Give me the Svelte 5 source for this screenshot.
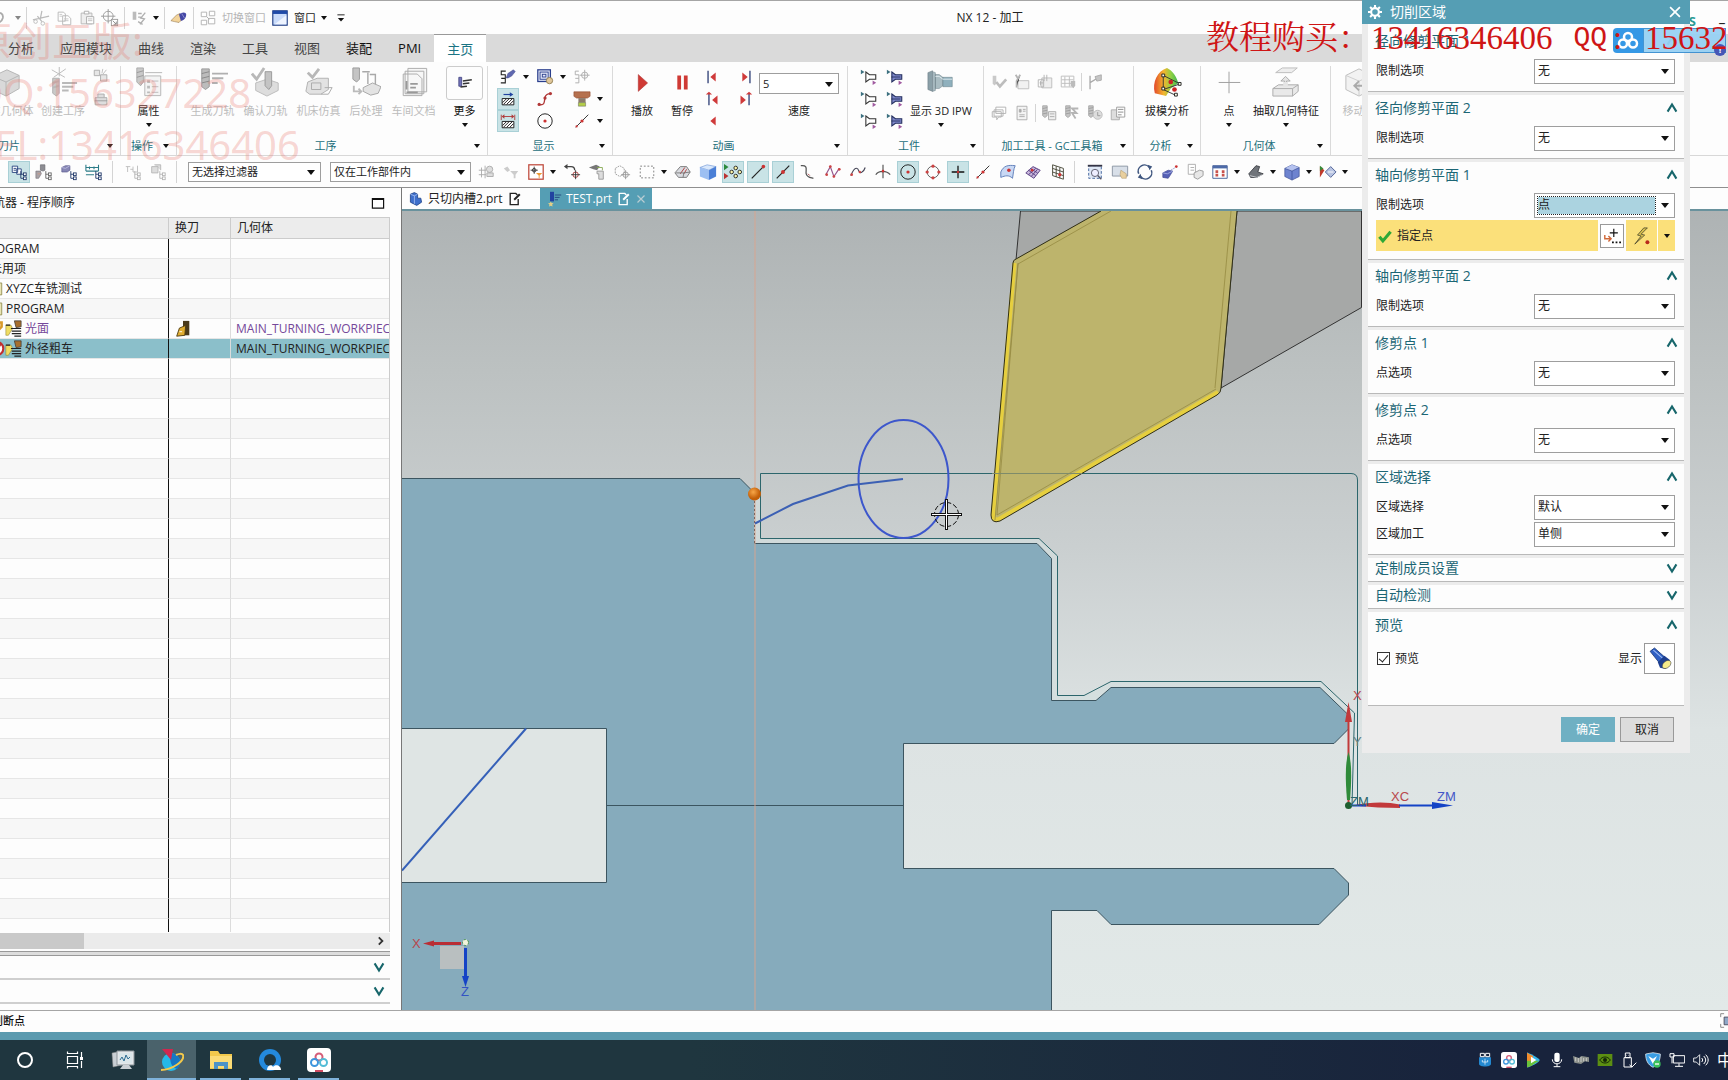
<script>
  const tree = '<path d="M12 9v8h3M12 12.500h3" fill="none" stroke="#223a6a"/><rect x="15" y="11" width="3" height="3" fill="#fff" stroke="#223a6a"/><rect x="15" y="15.500" width="3" height="3" fill="#fff" stroke="#223a6a"/>';
  const greyTool = '<path d="M3 2h5v11l-2.500 2L3 13z" fill="#c4c4c4" stroke="#a9a9a9"/><path d="M3 5l5-1M3 8l5-1M3 11l5-1" stroke="#9c9c9c"/>';
  const small = {
    undo: '<path d="M3 6c5-4 10-1 9 4-.5 2-2 4-4 5" fill="none" stroke="#aaa" stroke-width="2"/>',
    cut: '<path d="M1 12L19 8M6 8l5 6M11 2L9 12" stroke="#bbb" stroke-width="1.400" fill="none"/><circle cx="4" cy="14" r="2" fill="none" stroke="#bbb"/><circle cx="12" cy="16" r="2" fill="none" stroke="#bbb"/>',
    copy: '<path d="M3.500 3.500h6l2 2v8h-8zM8.500 7.500h6l3 3v7h-9z" fill="#fff" stroke="#b5b5b5"/><path d="M10 11h5M10 13h5M5 6h3M5 8h3" stroke="#c5c5c5"/>',
    paste: '<path d="M3.500 4.500h12v12h-12z" fill="#eee" stroke="#b5b5b5"/><path d="M7 2.500h5v3H7zM9.500 8.500h8v8h-8z" fill="#fff" stroke="#aaa"/><path d="M11 11h5M11 13h5" stroke="#bbb"/>',
    target: '<circle cx="8" cy="8" r="5.500" fill="none" stroke="#999"/><path d="M8 0v16M0 8h16" stroke="#999"/><rect x="11.500" y="11.500" width="7" height="7" fill="#fff" stroke="#999"/><path d="M13 13l4 4M17 14v3h-3" stroke="#888" fill="none"/>',
    tool: '<path d="M3 3h4v9H3z" fill="#bbb"/><path d="M9 5h4M9 9h3M9 14l5 3M17 4l-5 6 4 1-5 6" stroke="#b0b0b0" fill="none" stroke-width="1.500"/>',
    hand: '<path d="M1 13l6-6 4-2 3 6-4 4-5-1z" fill="#f3d49b" stroke="#8d6d40" stroke-width=".6"/><path d="M10 6c3-3 8-3 8 0 0 4-3 7-6 7z" fill="#4548a5"/><path d="M13 5l3 5" stroke="#8f92d2"/>',
    switchw: '<path d="M2.500 3.500h6v5h-6zM11.500 2.500h6v5h-6zM2.500 12.500h6v5h-6zM10.500 10.500h7v6h-7z" fill="#fff" stroke="#b0b0b0"/><path d="M8.500 8.500l3 3" stroke="#aaa"/>',
    window: '<rect x="2" y="2" width="16" height="16" fill="#c9dbfa" stroke="#17357e" stroke-width="1.200"/><path d="M2 2h16v3.500H2z" fill="#1f4aa8"/><path d="M4 17L17 7v10z" fill="#eef4ff"/>',
    custom: '<path d="M6 6.500h8" stroke="#111"/><path d="M6.500 10h7L10 14z" fill="#111"/>',
    geo: '<path d="M2.500 2.500h6v6h-6zM9.500 7.500h7v7h-7z" fill="#e6e6e6" stroke="#aaa"/><path d="M12 1l-1 5M16 2l-4 5" stroke="#bbb"/>',
    box: '<path d="M3.500 8.500h13v8h-13zM6.500 8V4.500h7V8" fill="#ddd" stroke="#aaa"/><path d="M3 12h14" stroke="#999"/>',
    path1: '<path d="M7.500 3.500h-5v4h4.500v4H2.500M7 11.500v5H2" fill="none" stroke="#222" stroke-width="1.200"/><path d="M8 11l2-5 6-4 2 2-4 5-4 2z" fill="#5f68b0" stroke="#3f4488" stroke-width=".6"/>',
    path2: '<rect x="2" y="2" width="14" height="13" fill="#e4e8f8" stroke="#2a3f8c" stroke-width="1.400"/><rect x="4.500" y="4.500" width="9" height="8" fill="none" stroke="#2a3f8c"/><rect x="7" y="7" width="4" height="3" fill="none" stroke="#2a3f8c"/><circle cx="15" cy="14" r="3.500" fill="#e0c79b" stroke="#8f7a4c"/>',
    path3: '<path d="M6.500 3.500h-4v4h4v4h-4M6.500 11.500v5h-4" fill="none" stroke="#aaa"/><circle cx="13" cy="8" r="3.500" fill="none" stroke="#aaa"/><path d="M13 2v12M7.500 8h11" stroke="#aaa"/>',
    hatch1: '<path d="M3.500 9.500h13v7h-13z" fill="#fff" stroke="#111"/><path d="M4 14l4-4M5 16l6-6M8.500 16l6-6M12 16l4-4" stroke="#111"/><path d="M5 5h8" stroke="#2143a0" stroke-width="1.300"/><path d="M12 2.500l4 2.500-4 2.500z" fill="#2143a0"/>',
    hatch2: '<path d="M3.500 10.500h13v7h-13z" fill="#fff" stroke="#111"/><path d="M4 15l4-4M5 17l6-6M8.500 17l6-6M12 17l4-4" stroke="#111"/><path d="M2.500 3v6M17.500 3v6M5 5h10" stroke="#b03a3a" fill="none"/><path d="M6 2.500L3 5l3 2.500zM14 2.500l3 2.500-3 2.500z" fill="#b03a3a"/>',
    curve: '<path d="M3 16c8 2 6-5 7-8s3-4 6-4" fill="none" stroke="#b03a3a" stroke-width="1.500"/><circle cx="3.500" cy="16" r="1.800" fill="#b23838"/><circle cx="10" cy="9" r="1.800" fill="#b23838"/><circle cx="16" cy="4" r="1.800" fill="#b23838"/>',
    circ: '<circle cx="10" cy="10" r="8" fill="none" stroke="#111"/><circle cx="10" cy="10" r="1.800" fill="#c33"/>',
    holder: '<path d="M1 2h18v5l-3 2H4L1 7z" fill="#b5714f" stroke="#8a4327" stroke-width=".6"/><path d="M6 9h8v5H6z" fill="#8b7b6c"/><path d="M6 14h8v4H6z" fill="#b5cf49" stroke="#555" stroke-width=".5"/>',
    line: '<path d="M3 17L17 3" stroke="#222"/><circle cx="10" cy="10" r="1.800" fill="#c33"/><circle cx="4" cy="16" r="1.200" fill="#c33"/>',
    toStart: '<path d="M4.500 3v14" stroke="#24356f" stroke-width="1.400"/><path d="M13 5v10l-6-5z" fill="#cf3a3a"/>',
    toEnd: '<path d="M15.500 3v14" stroke="#24356f" stroke-width="1.400"/><path d="M7 5v10l6-5z" fill="#cf3a3a"/>',
    prev: '<path d="M5.500 4v13" stroke="#24356f" stroke-width="1.400"/><path d="M2 5l3.500-3L9 5z" fill="#cf3a3a"/><path d="M15 6v10l-6-5z" fill="#cf3a3a"/>',
    next: '<path d="M14.500 4v13" stroke="#24356f" stroke-width="1.400"/><path d="M11 5l3.500-3L18 5z" fill="#cf3a3a"/><path d="M5 6v10l6-5z" fill="#cf3a3a"/>',
    back: '<path d="M13 5v10l-6-5z" fill="#cf3a3a"/>',
    ipwA: '<path d="M6.500 4.500l4 3h7v5h-7l-4 3z" fill="#fff" stroke="#333" stroke-width="1.200"/><path d="M1 2l4 2.500L1 7z" fill="#3d7180"/><path d="M14 14l4 2.500-4 2.500z" fill="#a05aa0"/>',
    ipwB: '<path d="M6.500 4.500l4 3h7v5h-7l-4 3z" fill="#7d86c9" stroke="#25305f" stroke-width="1.200"/><path d="M6 10h10" stroke="#25305f"/><path d="M1 2l4 2.500L1 7z" fill="#3d7180"/><path d="M14 14l4 2.500-4 2.500z" fill="#a05aa0"/>',
    g1: '<path d="M3 3h4v9l-2 2-2-2z" fill="#c9c9c9"/><path d="M7 10l4 5 7-8" fill="none" stroke="#bdbdbd" stroke-width="3"/>',
    g2: '<path d="M5.500 8.500h12v9h-12z" fill="#f1f1f1" stroke="#bbb"/><path d="M3 2l3 5M8 2L4 9v7" stroke="#b5b5b5" stroke-width="2"/>',
    g3: '<path d="M6.500 5.500h11v11h-11z" fill="#eee" stroke="#bbb"/><path d="M2.500 7.500h6v8h-6zM9 2v7M12 2v7M5 9v5M4 11h4" fill="none" stroke="#b0b0b0"/>',
    g4: '<path d="M2.500 3.500h14v12h-14zM3 7.500h13M3 11.500h13M6.500 4v11M11.500 4v11" fill="none" stroke="#bbb"/><path d="M13 9h5v5l-2 3-3-3z" fill="#bbb"/>',
    g5: '<path d="M4.500 3v15M4 11l10-6" stroke="#aaa" stroke-width="1.500"/><path d="M10 4l7-2v6l-5 1z" fill="#c6c6c6" stroke="#aaa"/>',
    g6: '<path d="M6.500 3.500h11v7h-11zM4.500 6.500h10v7h-10zM2.500 8.500h10v6h-3l-2 3v-3h-5z" fill="#fff" stroke="#b0b0b0"/>',
    g7: '<path d="M4.500 2.500h11v15h-11z" fill="#f4f4f4" stroke="#aaa"/><path d="M7 6h2v3H7zM11 6h3M11 8h3M7 12h6M7 14h6" fill="#aaa" stroke="#aaa"/>',
    g8: greyTool + '<path d="M9.500 8.500h8v9h-8z" fill="#eee" stroke="#aaa"/><path d="M11 11h5M11 14h5" stroke="#aaa"/>',
    g9: greyTool + '<path d="M17 5h-7l5 5h-5l4 6" fill="none" stroke="#b5b5b5" stroke-width="2"/>',
    g10: greyTool + '<circle cx="13" cy="12" r="5" fill="#ddd" stroke="#bbb"/><path d="M13 9v4h3" stroke="#999" fill="none"/>',
    g11: '<path d="M2.500 6.500h9v11h-9z" fill="#ddd" stroke="#aaa"/><path d="M8.500 3.500h9v11h-9z" fill="#fff" stroke="#999"/><path d="M10 6h6M10 9h6M10 12h4" stroke="#888"/>',
    v1: '<path d="M2.500 3.500h6v7h-6zM7.500 6.500h5v6h-5z" fill="#fff" stroke="#27427e"/><path d="M4 6h3M4 8h3" stroke="#27427e"/>' + tree,
    v2: '<path d="M6 2h5v6L9 9 6 8z" fill="#8d8d93" stroke="#66666d" stroke-width=".7"/><path d="M1 9h5l1 3-3 5H1z" fill="#a9a3a6" stroke="#77727a" stroke-width=".7"/><path d="M3 12h3" stroke="#c98"/>' + tree.replaceAll('#223a6a', '#666'),
    v3: '<path d="M2 5l4-2h5v5l-3 2H2z" fill="#8787b5" stroke="#57578a" stroke-width=".7"/><path d="M2 5l4 1 5-3" stroke="#b9b9dc" fill="none"/>' + tree,
    v4: '<path d="M1 5h14M1 9h14M1 2v7M5 4v3M10 4v3M15 2v7M1 13h9" stroke="#2c7c88" fill="none" stroke-width="1.200"/>' + tree,
    v5: '<path d="M2 4h5M4 4v6M10 4v6h5V3M7 7h3" stroke="#bbb" fill="none"/>' + tree.replaceAll('#223a6a', '#b5b5b5'),
    v6: '<path d="M3 4h7v7H3zM6 2h7v6" fill="#ddd" stroke="#b5b5b5"/>' + tree.replaceAll('#223a6a', '#b5b5b5'),
    s1: '<path d="M5 5v11M2 8h8M2 13h8M9 3v14" stroke="#aaa" fill="none"/><circle cx="14" cy="7" r="3.500" fill="#ddd" stroke="#aaa"/><path d="M11 11h7v4h-7z" fill="#ddd" stroke="#aaa"/>',
    s2: '<path d="M2 6l4-2 3 4-3 2z" fill="#ccc"/><path d="M9 9h9l-3 4v4h-2v-4z" fill="#ccc"/>',
    s3: '<rect x="2" y="2" width="16" height="16" fill="#fff" stroke="#bf4a3c" stroke-width="1.400"/><circle cx="8" cy="8" r="2" fill="none" stroke="#333"/><path d="M8 4v8M4 8h8" stroke="#333"/><path d="M10 11h7l-3 3v3h-1v-3z" fill="#ee9a35"/>',
    s4: '<path d="M3 4h6c3 0 4 2 4 4" fill="none" stroke="#444" stroke-width="1.500"/><path d="M1 4l4-3v6z" fill="#444"/><circle cx="14" cy="13" r="3" fill="none" stroke="#a33"/><path d="M14 8v10M9 13h10" stroke="#333"/>',
    s5: '<path d="M1 5l8-3 4 2-3 4-4-1z" fill="#777"/><path d="M10 9h7v9h-5v-6h-2z" fill="#ddd" stroke="#999"/><path d="M10 5h6v3" stroke="#8a5" fill="none"/>',
    s6: '<path d="M2.500 6l5-3 5 3v6l-5 3-5-3z" fill="none" stroke="#999" stroke-dasharray="2 1"/><circle cx="14" cy="13" r="3" fill="none" stroke="#999"/><path d="M14 8v10M9 13h10" stroke="#999"/>',
    s7: '<rect x="2.500" y="3.500" width="15" height="13" fill="none" stroke="#777" stroke-dasharray="2 2"/>',
    s8: '<path d="M1 11l6-7h7l4 6-4 6H5z" fill="#d9dbe0" stroke="#777"/><path d="M7 12l5-7M11 12l3-5" stroke="#a33"/><path d="M2 11h9l7-1M11 11l-1 5" stroke="#777" fill="none"/>',
    s9: '<path d="M1 5l8-3 10 2-8 4z" fill="#d9e8fc" stroke="#5b86cf" stroke-width=".6"/><path d="M1 5l10 3v11l-10-4z" fill="#9cbff2"/><path d="M11 8l8-4v11l-8 4z" fill="#4b7fd6"/>',
    snap: '<path d="M0 1l5 3.500L0 8z" fill="#2a8a3c"/><path d="M0 11l5 3.500L0 18z" fill="#b33"/><g fill="#fff7a8" stroke="#222"><circle cx="13" cy="5.500" r="2"/><circle cx="8.500" cy="10" r="2"/><circle cx="17.500" cy="10" r="2"/><circle cx="13" cy="14.500" r="2"/></g>',
    end: '<path d="M3 17L16 4" stroke="#222" stroke-width="1.300"/><circle cx="16" cy="4" r="2" fill="#c33"/>',
    mid: '<path d="M3 17L17 3" stroke="#222" stroke-width="1.300"/><circle cx="10" cy="10" r="2.200" fill="#c33"/>',
    tan: '<path d="M2 3c9-1 5 5 6 9s4 4 8 5" fill="none" stroke="#555" stroke-width="1.400"/><path d="M10 12l2 2" stroke="#a33"/>',
    poly: '<path d="M2 13l5-9 4 11 6-9" fill="none" stroke="#93568d" stroke-width="1.300"/><g fill="#c44"><circle cx="3" cy="13" r="1.500"/><circle cx="7" cy="4" r="1.500"/><circle cx="11" cy="15" r="1.500"/><circle cx="17" cy="7" r="1.500"/></g>',
    spl: '<path d="M2 14c5-12 8-8 9-5s5 2 7-4" fill="none" stroke="#445" stroke-width="1.300"/><circle cx="3" cy="13" r="1.500" fill="#c44"/><circle cx="12" cy="10" r="1.300" fill="#c44"/>',
    inter: '<path d="M10 2v15M2 13c3-5 12-5 16 0" fill="none" stroke="#555" stroke-width="1.300"/><circle cx="10" cy="9" r="1.500" fill="#c33"/>',
    quad: '<circle cx="10" cy="10" r="6.500" fill="none" stroke="#555"/><g fill="#c44"><circle cx="10" cy="3.500" r="1.800"/><circle cx="10" cy="16.500" r="1.800"/><circle cx="3.500" cy="10" r="1.800"/><circle cx="16.500" cy="10" r="1.800"/></g>',
    plus: '<path d="M10 3v14M3 10h14" stroke="#111" stroke-width="1.400"/><circle cx="10" cy="10" r="1.300" fill="#c33"/>',
    surf: '<path d="M2 10c3-7 8-8 16-7-2 4-2 9-3 14-4-4-8-3-13-1z" fill="#c8d8f4" stroke="#5878b5"/><circle cx="11" cy="8" r="2" fill="#c33"/>',
    grid: '<path d="M2 11l8-7 8 4-7 9z" fill="#c9b7dd" stroke="#553c7e"/><path d="M5 8l8 6M7 6l8 5M5 13l8-7M8 15l7-8" stroke="#553c7e"/><circle cx="9" cy="8" r="1.500" fill="#c33"/>',
    grid2: '<path d="M4 2l12 4v12L4 14zM8 3.500v12M12 5v12M4 6l12 4M4 10l12 4" fill="none" stroke="#443"/><circle cx="12" cy="13" r="1.800" fill="#c33"/>',
    fit: '<path d="M3 3h14v14H3z" fill="#dfe8f6" stroke="#3a5d98" stroke-dasharray="3 2"/><path d="M2 3h16" stroke="#334" stroke-width="2"/><circle cx="10" cy="11" r="4" fill="#eef" stroke="#556"/><path d="M13 14l4 4" stroke="#556" stroke-width="1.500"/>',
    zoomw: '<path d="M1.500 3.500h17v11h-17z" fill="#d8dfe8" stroke="#8892a0"/><path d="M11 8l6 4v5h-5l-2-4z" fill="#e8cf9e" stroke="#a58b58" stroke-width=".5"/>',
    rot: '<path d="M3 12A7 7 0 0 1 15 5M17 8A7 7 0 0 1 5 15" fill="none" stroke="#3f567f" stroke-width="1.700"/><path d="M13 2l5 2-3 4zM7 18l-5-2 3-4z" fill="#3f567f"/>',
    pan: '<path d="M2 11l6-3 5 1-3 5-2 3-6-1z" fill="#5560b5" stroke="#39428c" stroke-width=".7"/><path d="M2 11l5 1 6-3" stroke="#a4abe4" fill="none"/><path d="M11 8l5-3" stroke="#8890c9" stroke-dasharray="2 1"/><circle cx="17" cy="4" r="1.500" fill="#c33"/>',
    persp: '<path d="M2.500 1.500h8v11h-8z" fill="#fff" stroke="#aaa"/><path d="M9 11l6-3 4 1v5l-6 4-4-2z" fill="#e7e7e7" stroke="#999"/><path d="M5 5h4M5 8h4" stroke="#aaa"/>',
    layout: '<path d="M2 3h16v14H2z" fill="#fff" stroke="#3e5a94"/><path d="M2 3h16v3H2z" fill="#4d6aa8"/><path d="M5 8h3v3H5zM12 8h3v3h-3zM5 12h3v3H5zM12 12h3v3h-3z" fill="#c9534c"/>',
    section: '<path d="M2 12l8-9 4 1-2 6 6 2-7 4-7 0z" fill="#70747a" stroke="#3d4045"/><path d="M3 14l8 2 6-3" stroke="#cfd2d6" fill="none"/>',
    cube: '<path d="M2 6l8-4 8 3v10l-8 4-8-4z" fill="#6d83cf" stroke="#34478f" stroke-width=".7"/><path d="M2 6l8-4 8 3-8 4z" fill="#b5c2ef"/><path d="M2 6l8 3 8-4M10 9v10" stroke="#34478f" fill="none" stroke-width=".7"/>',
    vis: '<path d="M1 4l5 4-5 8z" fill="#c0392b"/><path d="M1 3l4 3-4 3z" fill="#3a8a3a"/><path d="M7 10l6-6 6 6-6 6z" fill="#b8c4e2" stroke="#4b5d93"/><path d="M10 10h6" stroke="#fff"/>',
    part: '<path d="M3 4l5-2 4 2v5h4l1 5-6 4-8-4z" fill="#3f6fcb" stroke="#1d4187"/><path d="M3 4l5 2 4-2M8 6v10" stroke="#a9c3f2" fill="none"/>',
    mfg: '<path d="M5 1h5v12H5z" fill="#2143a0"/><path d="M11 5h8M11 8h6M11 11h4" stroke="#1d3a78"/><path d="M6 13l1 2 2.500.3-1.800 1.700.5 2.500L6 18.300 3.800 19.500l.5-2.500L2.500 15.300 5 15z" fill="#e3cf86"/>',
    edit: '<path d="M14 10v7H4V3h7l2 2" fill="none" stroke="currentColor" stroke-width="1.700"/><path d="M9 11l7-7" stroke="currentColor" stroke-width="2.500"/>',
    op: '<path d="M1 6h6l2 4-5 8H1z" fill="#f0dd62" stroke="#8c7d2a" stroke-width=".6"/><path d="M1 6h5M7 10h12M8 13h11M8 16h11M11 19h8" stroke="#222" stroke-width="1.400"/><path d="M11 1h8v7l-6 1z" fill="#a76f2e" stroke="#333" stroke-width=".8"/>',
    knife: '<path d="M10 1h7v16h-7z" fill="#4a3a1a"/><path d="M3 18l3-9 7-3-1 11z" fill="#e0ac30" stroke="#4d3a0f"/><path d="M6 13h3" stroke="#fff"/>',
    ban: '<circle cx="10" cy="10" r="8" fill="#fff" stroke="#c22f2f" stroke-width="2.500"/><path d="M4.500 15.500l11-11" stroke="#c22f2f" stroke-width="2.500"/>',
    key: '<path d="M6 3h10v5l-4 4v6" fill="none" stroke="#d99a2b" stroke-width="3"/>',
    folder: '<path d="M2.500 3.500h16v14h-16z" fill="#e9e4b4" stroke="#8f8a4c"/>',
    bolt: '<path d="M12 1L5 9l4 1-7 9L13 9l-4-1 7-7z" fill="#d9c14d" stroke="#3a3a2a" stroke-width=".8"/><circle cx="16" cy="17" r="2.200" fill="#b82a1c"/>',
    ptdlg: '<path d="M12 2v9M7.500 6.500h9" stroke="#111" stroke-width="1.300"/><path d="M2 9v4h6M6 10l3 3-3 3" fill="none" stroke="#d06a3b" stroke-width="1.600"/><path d="M10 17h2M14 17h2M18 17h2" stroke="#111" stroke-width="2"/>',
    tick: '<path d="M2 11l5 6L18 4" fill="none" stroke="#2ea836" stroke-width="4.500"/>',
    gear: '<circle cx="10" cy="10" r="5.500" fill="none" stroke="#fff" stroke-width="3"/><path d="M10 0v4M10 16v4M0 10h4M16 10h4M3 3l2.500 2.500M14.500 14.500L17 17M17 3l-2.500 2.500M5.500 14.500L3 17" stroke="#fff" stroke-width="3"/>',
    torch: '<path d="M1 3l4-3 9 8-5 5z" fill="#2e5fc4" stroke="#12306e" stroke-width=".7"/><path d="M14 7l5 4-1 5-3 3-5-1-2-5z" fill="#1d3f8f"/><ellipse cx="16" cy="15" rx="4.500" ry="3" transform="rotate(-40 16 15)" fill="#f6eb8a" stroke="#444" stroke-width=".5"/><path d="M4 2l8 7" stroke="#9dbcf4"/>',
    up: '<path d="M4.500 14.500l5.500-9 5.500 9" fill="none" stroke="#17666b" stroke-width="2.600"/>',
    down: '<path d="M4.500 5.500l5.500 9 5.500-9" fill="none" stroke="#17666b" stroke-width="2.600"/>',
    close: '<path d="M3 3l14 14M17 3L3 17" stroke="currentColor" stroke-width="2.400"/>',
    max: '<path d="M3 4.500h14v12H3z" fill="none" stroke="#111" stroke-width="1.500"/><path d="M3 5h14" stroke="#111" stroke-width="2.500"/>',
    full: '<path d="M2 6V2h4M2 14v4h4" fill="none" stroke="#777"/><path d="M6 6h14v9H6z" fill="#8fa8c8" stroke="#445"/>'
  };
  const large = {
    block: '<path d="M2 10l15-7 13 6v14l-14 8L2 24z" fill="#d9d9d9" stroke="#b3b3b3"/><path d="M2 10l14 6 14-7M16 16v15" fill="none" stroke="#b3b3b3"/>',
    newop: '<path d="M5 12h7v16l-3 3-4-3z" fill="#c9c9c9" stroke="#b0b0b0"/><path d="M5 17l7-2M5 22l7-2M15 17h16M15 21h12M15 25h7" stroke="#b9b9b9" stroke-width="2"/><path d="M12 0v10M4 3l14 8M19 2L6 11" stroke="#bbb"/>',
    prop: '<path d="M3 1h7v15l-3 4-4-4z" fill="#c9c9c9" stroke="#aaa"/><path d="M3 6l7-2M3 11l7-2" stroke="#999"/><path d="M12 6h18M11.500 9.500h17v21h-17z" fill="#f4f4f4" stroke="#b5b5b5"/><path d="M14 14h3v3h-3zM14 20h3v3h-3zM14 26h3v2h-3z" fill="#bbb"/><path d="M19 15h7M19 21h7M19 27h7" stroke="#bbb"/>',
    gen: '<path d="M4 2h8v19l-4 3-4-3z" fill="#bcbcbc" stroke="#999"/><path d="M4 7l8-2M4 12l8-2M4 17l8-2" stroke="#888"/><path d="M15 7h17M15 12h12M15 17h6" stroke="#b0b0b0" stroke-width="2"/>',
    verify: '<path d="M5 17l12-4 12 4v8l-12 6-12-6z" fill="#ddd" stroke="#bbb"/><path d="M15 5h7v15l-3 4-4-4z" fill="#c4c4c4" stroke="#999"/><path d="M1 7l5 6L14 1" fill="none" stroke="#b8b8b8" stroke-width="3"/>',
    sim: '<path d="M4 16l10-4h12v12l-8 5H6l-4-3z" fill="#e2e2e2" stroke="#b0b0b0"/><path d="M4 6l5 5 7-9" fill="none" stroke="#b8b8b8" stroke-width="3"/><path d="M8 17h10v7H8zM22 22h8l-4 7h-8" fill="none" stroke="#aaa"/>',
    post: '<path d="M2 1h7v12l-3 3-4-3z" fill="#c4c4c4" stroke="#999"/><path d="M12 5h8M18 6v12M20 8h6v12" fill="none" stroke="#a9a9a9" stroke-width="1.500"/><path d="M13 22l10-5 9 4-3 7-8 2-8-4z" fill="#e3e3e3" stroke="#a5a5a5"/><path d="M3 20v6h7M8 23l3 3-3 3" fill="none" stroke="#bbb" stroke-width="2"/>',
    doc: '<path d="M9.500 1.500h20v25h-20zM6.500 4.500h20v24h-20zM4.500 7.500h15l5 5v18h-20z" fill="#f7f7f7" stroke="#aaa"/><path d="M8 15v9M12 18h8M12 22h6M8 27h12" stroke="#999" stroke-width="2"/>',
    more: '<path d="M9 9h3.500v11H9z" fill="#7274b8" stroke="#3f4180"/><path d="M14 13.500l11-1.500M14 17l8-1M11 21l8-1" stroke="#333" stroke-width="1.800"/>',
    play: '<path d="M12 8l10 9-10 9z" fill="#cf3a35" stroke="#a52a2a" stroke-width=".5"/>',
    pause: '<path d="M11 9h4v15h-4zM18 9h4v15h-4z" fill="#cf3a35"/>',
    ipw: '<path d="M2 6l5-2v22l-5-2z" fill="#8ba0a8" stroke="#5e7078" stroke-width=".5"/><path d="M7 5l3 1v19l-3 1zM10 8h4l4 3v9l-4 3h-4z" fill="#a9bcc2" stroke="#677a82" stroke-width=".5"/><path d="M18 11h10v10H18z" fill="#8fb0bd" stroke="#56707a" stroke-width=".5"/><path d="M10 10h4l4 3h10" stroke="#dfeaee" fill="none"/>',
    draft: '<defs><linearGradient id="dg"><stop offset="0" stop-color="#e2492b"/><stop offset=".4" stop-color="#f4b52e"/><stop offset=".7" stop-color="#8fd043"/><stop offset="1" stop-color="#3fb552"/></linearGradient></defs><path d="M3 28C0 16 6 4 16 1c6 3 10 9 12 16l-8 6-5 8z" fill="url(#dg)"/><path d="M12 9l18 9-18 6zM12 24l13 6" fill="none" stroke="#333"/><g fill="#ffe" stroke="#222"><path d="M10.500 7.500h3v3h-3zM10.500 21.500h3v3h-3zM28 16.500h3v3h-3zM24 28h3v3h-3z"/></g><circle cx="20" cy="16" r="2.500" fill="#c22"/><circle cx="24" cy="24" r="2.500" fill="#c22"/>',
    point: '<path d="M16 5v23M5 16.500h23" stroke="#9c9c9c"/>',
    extract: '<path d="M5 6l7-5h16l-6 5z" fill="#eee" stroke="#bbb"/><path d="M14.500 21v-6h-4l5-5 5 5h-4v6z" fill="#e5e5e5" stroke="#aaa"/><path d="M2 23l6-4h21v7l-6 5H2z" fill="#e9e9e9" stroke="#aaa"/><path d="M2 23h21l6-4M23 23v8" fill="none" stroke="#aaa"/><path d="M13 21v-5h5v5z" fill="#e5e5e5"/>',
    move: '<path d="M2 9l14-7 14 7v15l-14 7-14-7z" fill="#f2f2f2" stroke="#bbb"/><path d="M2 9l14 6 14-6M16 15v15" fill="none" stroke="#ccc"/><path d="M12 20h14M16 15l-5 5 5 5" fill="none" stroke="#aaa" stroke-width="2"/>'
  };
  const taskIcons = {
    circle: '<circle cx="12" cy="12" r="7" fill="none" stroke="#fff" stroke-width="2"/>',
    view: '<path d="M5.500 8.500h10v7h-10zM5.500 3.500v2h10v-2M5.500 20.500v-2h10v2M19.500 4v5M19.500 13v7" fill="none" stroke="#fff" stroke-width="1.200"/><path d="M18 9h3v3h-3z" fill="#fff"/>',
    monitor: '<path d="M1 5l10-2v14l-9 2z" fill="#c9cfd4" stroke="#888" stroke-width=".5"/><path d="M6 3h17v14H6z" fill="#e3e7ea" stroke="#8d959b"/><path d="M8 5h13v10H8z" fill="#dbe6ea"/><path d="M9 12l2-3 2 4 2-6 2 4 2-2" fill="none" stroke="#2c6c93"/><path d="M12 17h6l3 4H9z" fill="#c9cfd4"/>',
    nx: '<circle cx="11" cy="14" r="9" fill="#25b9e8"/><path d="M11 5c5 0 9 4 9 9 0 3-1 5-3 7-6-2-8-8-6-16z" fill="#1577c4"/><path d="M2 1h11l-2 11z" fill="#d0274f"/><path d="M1 22C12 22 25 13 23 7c-1-2-5-1-7 0" fill="none" stroke="#f2c84b" stroke-width="2"/>',
    files: '<path d="M1 3h8l2 3h12v15H1z" fill="#f2c94c"/><path d="M1 8h22v12H1z" fill="#fbdc77"/><path d="M5 21v-7h14v7h-4v-3H9v3z" fill="#4d93c7"/>',
    browser: '<circle cx="12" cy="12" r="11" fill="#2489dc"/><circle cx="12" cy="12" r="6" fill="#1f363f"/><path d="M9 22c0-5 5-6 6-3 2-3 8-2 8 3z" fill="#fff"/>',
    baidu: '<rect width="24" height="24" rx="4" fill="#fff"/><g fill="none" stroke-width="2"><circle cx="12" cy="9" r="3.500" stroke="#d55c78"/><circle cx="7.500" cy="14.500" r="3.500" stroke="#3d95dd"/><circle cx="16.500" cy="14.500" r="3.500" stroke="#52bcd6"/></g><path d="M8 23h8" stroke="#d04b62" stroke-width="2"/>',
    usb: '<path d="M3 8h18v10c0 5-18 5-18 0z" fill="#2388d0"/><path d="M5 2h6v5H5zM13 2h6v5h-6z" fill="none" stroke="#fff" stroke-width="1.500"/><path d="M12 10v9M8 12v3h8v-3" fill="none" stroke="#fff"/>',
    video: '<path d="M3 1c0-1 18 8 19 11S5 24 3 23z" fill="#35b5e8"/><path d="M3 1l9 5v13l-9 4z" fill="#f28c2c"/><path d="M3 13h18L9 21l-6 2z" fill="#69c33b"/><path d="M9 7l8 5-8 5z" fill="#fff"/>',
    mic: '<rect x="8" y="1" width="8" height="14" rx="3" fill="#fff"/><path d="M5 11c0 9 14 9 14 0M12 18v4M7 22h10" fill="none" stroke="#fff" stroke-width="1.500"/>',
    net: '<path d="M0 6l9 3 4-3 11 2v7l-6-1-6 4-10-2z" fill="#8a8f8a"/><path d="M4 8v6M8 9v6M12 7v8M16 9v5M20 9v5" stroke="#e5e5e5"/>',
    nv: '<path d="M1 3h22v18H1z" fill="#5c8f12"/><path d="M4 12c4-6 12-6 16 0-4 6-12 6-16 0z" fill="none" stroke="#132608" stroke-width="1.500"/><circle cx="12" cy="12" r="3" fill="#132608"/>',
    drive: '<path d="M4.500 8.500h11v14h-11zM6.500 1.500h7v7h-7z" fill="none" stroke="#fff" stroke-width="1.500"/><path d="M8 5h1M11 5h1" stroke="#fff"/><path d="M13 19l3 4 7-7" fill="none" stroke="#fff" stroke-width="1.500"/>',
    shield: '<path d="M1 3l11-2 11 2c0 9-3 16-11 20C4 19 1 12 1 3z" fill="#3a9de4" stroke="#fff"/><path d="M5 6l7 4 6-4-6 12z" fill="#fff"/><circle cx="18" cy="18" r="5.500" fill="#3cc15b"/><path d="M15 18h6" stroke="#fff" stroke-width="2"/>',
    lan: '<path d="M6.500 5.500h17v11h-17zM15 17v4M9 21.500h12M1.500 2.500h6v5h-6zM4.500 8v9" fill="none" stroke="#fff" stroke-width="1.500"/>',
    vol: '<path d="M1 9h4l5-5v16l-5-5H1z" fill="none" stroke="#fff" stroke-width="1.300"/><path d="M13 9c2 2 2 4 0 6M16 6c4 4 4 8 0 12M19 4c5 5 5 11 0 16" fill="none" stroke="#fff" stroke-width="1.500"/>'
  };

  const tabs = ['分析', '应用模块', '曲线', '渲染', '工具', '视图', '装配', 'PMI'];
  const opButtons = [['gen', '生成刀轨'], ['verify', '确认刀轨'], ['sim', '机床仿真'], ['post', '后处理', 'dis narrow'], ['doc', '车间文档']];
  const snapTools = ['s1', 's2', 's3', '>', 's4', 's5', 's6', 's7', '>', 's8', 's9', '*snap', '*end', '*mid', 'tan', 'poly', 'spl', 'inter', '*circ', 'quad', '*plus', 'line', 'surf', 'grid', 'grid2'];
  const viewTools = ['fit', 'zoomw', 'rot', 'pan', 'persp', 'layout', '>', 'section', '>', 'cube', '>', 'vis', '>'];
  const rows = [
    { name: 'PROGRAM', shift: 'far' },
    { name: '未用项', shift: 'near' },
    { name: 'XYZC车铣测试', icons: ['folder'] },
    { name: 'PROGRAM', icons: ['folder'] },
    { name: '光面', icons: ['key', 'op'], knife: true, geo: 'MAIN_TURNING_WORKPIECE', kind: 'purple' },
    { name: '外径粗车', icons: ['ban', 'op'], geo: 'MAIN_TURNING_WORKPIECE', kind: 'picked' },
    ...Array.from({ length: 29 }, () => ({ name: '' }))
  ];
  const sections = [
    { title: '径向修剪平面 1', fields: [['限制选项', '无']] },
    { title: '径向修剪平面 2', fields: [['限制选项', '无']] },
    { title: '轴向修剪平面 1', fields: [['限制选项', '点']], point: true },
    { title: '轴向修剪平面 2', fields: [['限制选项', '无']] },
    { title: '修剪点 1', fields: [['点选项', '无']] },
    { title: '修剪点 2', fields: [['点选项', '无']] },
    { title: '区域选择', fields: [['区域选择', '默认'], ['区域加工', '单侧']] },
    { title: '定制成员设置' },
    { title: '自动检测' },
    { title: '预览', fields: [], preview: true }
  ];
  const apps = [['circle', ''], ['view', ''], ['monitor', ''], ['nx', 'current'], ['files', 'open'], ['browser', 'open'], ['baidu', 'open']];
  const tray = ['usb', 'baidu', 'video', 'mic', 'net', 'nv', 'drive', 'shield', 'lan', 'vol'];
  let preview = $state(true);
</script>

{#snippet ic(name)}<svg class="ic" viewBox="0 0 20 20" aria-hidden="true">{@html small[name]}</svg>{/snippet}
{#snippet big(name, label, mode)}
  <button class="big {mode ?? ''}">
    <svg class="ic32" viewBox="0 0 32 32" aria-hidden="true">{@html large[name]}</svg>
    <span class="lbl">{label}</span>
    {#if mode?.includes('menu')}<i class="caret"></i>{/if}
  </button>
{/snippet}
{#snippet tool(name, extra)}
  <button class="tool {extra ?? ''}" aria-label={name}>{@render ic(name)}</button>
{/snippet}
{#snippet foot(text)}
  <div class="foot"><span>{text}</span><i class="caret"></i></div>
{/snippet}
{#snippet strip(list)}
  {#each list as t}
    {#if t === '>'}<i class="caret gapless"></i>
    {:else if t[0] === '*'}{@render tool(t.slice(1), 'on')}
    {:else}{@render tool(t)}{/if}
  {/each}
{/snippet}

<div class="app">
  <header class="quick">
    {@render ic('undo')}<i class="caret dim"></i><i class="bar"></i>
    {@render ic('cut')}{@render ic('copy')}{@render ic('paste')}{@render ic('target')}<i class="bar"></i>
    {@render ic('tool')}<i class="caret"></i><i class="bar"></i>
    {@render ic('hand')}<i class="bar"></i>
    <button class="flat dimtext">{@render ic('switchw')}切换窗口</button>
    <button class="flat">{@render ic('window')}窗口<i class="caret"></i></button>
    {@render ic('custom')}
    <h1>NX 12 - 加工</h1>
    <span class="brand">SIEMENS</span>
    <button class="min" aria-label="最小化">–</button>
  </header>

  <nav class="tabs">
    {#each tabs as t}<button class:dark={t === '装配' || t === 'PMI'}>{t}</button>{/each}
    <button class="active">主页</button>
  </nav>

  <section class="ribbon">
    <div class="group blade">
      <div class="body">
        {@render big('block', '创建几何体', 'dis')}
        {@render big('newop', '创建工序', 'dis')}
        <div class="col">{@render tool('geo')}{@render tool('box')}</div>
      </div>
      {@render foot('刀片')}
    </div>
    <div class="group acts">
      <div class="body mid">{@render big('prop', '属性', 'menu')}</div>
      {@render foot('操作')}
    </div>
    <div class="group ops">
      <div class="body">
        {#each opButtons as [i, l, m]}{@render big(i, l, m ?? 'dis')}{/each}
        {@render big('more', '更多', 'menu boxed')}
      </div>
      {@render foot('工序')}
    </div>
    <div class="group show">
      <div class="grid3">
        <div>{@render tool('path1')}<i class="caret"></i></div><div>{@render tool('path2')}<i class="caret"></i></div><div>{@render tool('path3')}</div>
        <div>{@render tool('hatch1', 'on')}</div><div>{@render tool('curve')}</div><div>{@render tool('holder')}<i class="caret"></i></div>
        <div>{@render tool('hatch2', 'on')}</div><div>{@render tool('circ')}</div><div>{@render tool('line')}<i class="caret"></i></div>
      </div>
      {@render foot('显示')}
    </div>
    <div class="group anim">
      <div class="body">
        {@render big('play', '播放', '')}
        {@render big('pause', '暂停', '')}
        <div class="col trio">{@render tool('toStart')}{@render tool('prev')}{@render tool('back')}</div>
        <div class="col trio">{@render tool('toEnd')}{@render tool('next')}</div>
        <label class="speed"><span class="sel"><select><option>5</option></select></span><span class="lbl">速度</span></label>
      </div>
      {@render foot('动画')}
    </div>
    <div class="group work">
      <div class="body">
        <div class="col">{@render tool('ipwA')}{@render tool('ipwA')}{@render tool('ipwA')}</div>
        <div class="col">{@render tool('ipwB')}{@render tool('ipwB')}{@render tool('ipwB')}</div>
        {@render big('ipw', '显示 3D IPW', 'menu')}
      </div>
      {@render foot('工件')}
    </div>
    <div class="group gc">
      <div class="two">
        <div>{@render tool('g1')}{@render tool('g2')}{@render tool('g3')}{@render tool('g4')}<i class="bar"></i>{@render tool('g5')}</div>
        <div>{@render tool('g6')}{@render tool('g7')}<i class="bar"></i>{@render tool('g8')}{@render tool('g9')}{@render tool('g10')}{@render tool('g11')}</div>
      </div>
      {@render foot('加工工具 - GC工具箱')}
    </div>
    <div class="group ana">
      <div class="body mid">{@render big('draft', '拔模分析', 'menu')}</div>
      {@render foot('分析')}
    </div>
    <div class="group geom">
      <div class="body">{@render big('point', '点', 'menu')}{@render big('extract', '抽取几何特征', 'menu')}</div>
      {@render foot('几何体')}
    </div>
    <div class="group last"><div class="body">{@render big('move', '移动面', 'dis')}</div></div>
  </section>

  <div class="picks">
    <div class="cluster a">{@render strip(['*v1', 'v2', 'v3', 'v4'])}</div>
    <i class="bar"></i>
    <div class="cluster b">{@render strip(['v5', 'v6'])}</div>
    <i class="bar"></i>
    <span class="sel filter"><select aria-label="选择过滤器"><option>无选择过滤器</option></select></span>
    <span class="sel scope"><select aria-label="选择范围"><option>仅在工作部件内</option></select></span>
    <div class="cluster">{@render strip(snapTools)}</div>
    <i class="bar"></i>
    <div class="cluster">{@render strip(viewTools)}</div>
  </div>

  <main>
    <aside>
      <div class="dock"><h2>工序导航器 - 程序顺序</h2><button class="tool" aria-label="最大化">{@render ic('max')}</button></div>
      <div class="tablewrap">
        <table>
          <thead><tr><th class="c1" aria-label="名称"></th><th class="c2">换刀</th><th>几何体</th></tr></thead>
          <tbody>
            {#each rows as r}
              <tr class={r.kind ?? ''}>
                <td class="c1"><div class="name {r.shift ?? ''} {r.icons ? 'n' + r.icons.length : ''}">
                  {#each r.icons ?? [] as i}{@render ic(i)}{/each}<span>{r.name}</span>
                </div></td>
                <td class="c2">{#if r.knife}{@render ic('knife')}{/if}</td>
                <td><div class="clip">{r.geo ?? ''}</div></td>
              </tr>
            {/each}
          </tbody>
        </table>
      </div>
      <div class="hscroll"><span class="thumb"></span><svg class="ic" viewBox="0 0 20 20" aria-hidden="true"><path d="M8 4l6 6-6 6" fill="none" stroke="#333" stroke-width="3"/></svg></div>
      <div class="splitter"></div>
      <button class="fold" aria-label="相关性">{@render ic('down')}</button>
      <button class="fold" aria-label="细节">{@render ic('down')}</button>
    </aside>

    <section class="view">
      <div class="doctabs">
        <button>{@render ic('part')}只切内槽2.prt{@render ic('edit')}</button>
        <button class="cur">{@render ic('mfg')}TEST.prt{@render ic('edit')}<span class="x">{@render ic('close')}</span></button>
      </div>
      <svg class="canvas" viewBox="402 211 1326 799" preserveAspectRatio="xMinYMin slice" role="img" aria-label="车削加工视图">
        <defs>
          <linearGradient id="bg" x1="0" y1="0" x2="0" y2="1">
            <stop offset="0" stop-color="#aeb3b4" /><stop offset=".2" stop-color="#bcc1c1" /><stop offset=".42" stop-color="#cacfd0" /><stop offset=".65" stop-color="#dde3e3" /><stop offset="1" stop-color="#e2e9e8" />
          </linearGradient>
          <radialGradient id="ball" cx=".4" cy=".35"><stop offset="0" stop-color="#f7a648" /><stop offset="1" stop-color="#c35f08" /></radialGradient>
        </defs>
        <rect x="402" y="211" width="1326" height="799" fill="url(#bg)" />
        <path d="M1020.500 211L1016 260L1102 211ZM1237 211H1361.500V307.500L1221 388Z" fill="#a6a8a7" stroke="#333" />
        <path d="M402 478.500H740L754.500 493V543.500H1037L1051.500 558.500V700.500H1096L1111 687.500H1320L1348.500 715V729L1334 743.500H903.500V868.500H1334L1348.500 883V895L1319 924.500H1111L1097 910.500H1051.500V1010H402Z" fill="#86abbc" />
        <path d="M754.500 543.500V493H760.500V538.500H1039L1057.500 556V695.500H1084L1111 681.500H1321L1353 713L1348.500 715L1320 687.500H1111L1096 700.500H1051.500V558.500L1037 543.500Z" fill="#d3dede" opacity=".7" />
        <path d="M402 728.500H606.500V883H402Z" fill="#dfe5e4" />
        <path d="M402 478.500H740L754.500 493M754.500 543.500H1037L1051.500 558.500V700.500H1096L1111 687.500H1320L1348.500 715V729L1334 743.500H903.500V868.500H1334L1348.500 883V895L1319 924.500H1111L1097 910.500H1051.500V1010M402 728.500H606.500V882.500H402M606.500 805.500H903.500" fill="none" stroke="#3c5560" />
        <path d="M754.500 493V543" stroke="#333" stroke-dasharray="2 2" />
        <path d="M760.500 473.500V538.500H1039L1057.500 556V695.500H1084L1111 681.500H1321L1354.500 713L1352 805M1357.500 805V480Q1357.500 473.500 1351 473.500H760.500" fill="none" stroke="#2c666c" />
        <path d="M755 211V1010" stroke="#dba58e" stroke-width="2" opacity=".45" />
        <path d="M402 870.500L526 728.500" stroke="#3560b8" stroke-width="2" />
        <path d="M1013 263Q1013 260 1016 259L1101 211H1237L1221 388Q1221 393 1217 395L1000 521Q992 525 991 515Z" fill="#bdb46c" />
        <path d="M1014.500 263L993 516Q993.500 520 998 519.500L1218 392" fill="none" stroke="#e6cf3f" stroke-width="4" />
        <path d="M1018 263L997 515L1216 389M1111 211L1018 264M1231 211L1215 388M1018 264L995 520" fill="none" stroke="#968b42" opacity=".8" />
        <path d="M1101 211L1016 259Q1013 260 1013 263L991 515Q991 524 1000 521L1217 395Q1221 393 1221 388L1237 211" fill="none" stroke="#302f18" />
        <path d="M992 473.500H1082" stroke="#7e8b6a" />
        <ellipse cx="903.500" cy="479" rx="45" ry="59" fill="none" stroke="#3d57cc" stroke-width="2" />
        <path d="M755 523.500L793 504L848 485.500L903 479" fill="none" stroke="#3c60b4" stroke-width="2" />
        <circle cx="754.500" cy="494" r="6.500" fill="url(#ball)" />
        <circle cx="946.500" cy="514.500" r="12" fill="none" stroke="#111" stroke-dasharray="5 2" />
        <path d="M946.500 499V530M931 514.500H962" stroke="#111" stroke-width="3" /><path d="M946.500 500V529M932 514.500H961" stroke="#fff" />
        <path d="M1348.500 805V720" stroke="#c13a3a" stroke-width="2" /><path d="M1345 722L1348.500 702L1352 722ZM1352 805.500Q1380 800 1400 804.500V808Q1380 808 1352 805.500Z" fill="#c2393b" />
        <path d="M1348.500 752Q1353 765 1350 800H1347Q1344 765 1348.500 752Z" fill="#2f8b3a" />
        <path d="M1348 805.500H1366M1399 805.500H1436" stroke="#1443c6" stroke-width="2" /><path d="M1432 802L1453 805.500L1432 809Z" fill="#1443c6" />
        <circle cx="1348.500" cy="805.500" r="3.500" fill="#1f5f30" />
        <g class="axis"><text x="1353" y="700" fill="#b8474c">X</text><text x="1353" y="746" fill="#668080">Y</text><text x="1350" y="806" fill="#2a666c">ZM</text><text x="1391" y="801" fill="#b8474c">XC</text><text x="1437" y="801" fill="#4357c8">ZM</text>
        <text x="412" y="948" fill="#b8474c">X</text><text x="461" y="996" fill="#3353c4">Z</text></g>
        <path d="M440 946h24v23h-24z" fill="#b9bfc0" /><path d="M434 943.500H461" stroke="#b92e35" stroke-width="3" /><path d="M423 943.500L434 940.500V946.500Z" fill="#b92e35" />
        <path d="M465.500 948V977" stroke="#1443c6" stroke-width="3" /><path d="M462 976H469L465.500 987Z" fill="#1443c6" /><circle cx="465.500" cy="942.500" r="3" fill="#f2f5dc" stroke="#3b8a3f" stroke-dasharray="2 2" />
      </svg>
    </section>
  </main>

  <footer class="status"><span>自动判断点</span>{@render ic('full')}</footer>
  <div class="taskbar">
    {#each apps as [i, s]}<button class="app-btn {s}" aria-label={i}><svg viewBox="0 0 24 24" aria-hidden="true">{@html taskIcons[i]}</svg></button>{/each}
    <div class="tray">
      {#each tray as t}<svg viewBox="0 0 24 24" aria-hidden="true">{@html taskIcons[t]}</svg>{/each}
      <span>中</span>
    </div>
  </div>

  <section class="dialog" aria-label="切削区域">
    <div class="dtitle">{@render ic('gear')}<h2>切削区域</h2><button aria-label="关闭">{@render ic('close')}</button></div>
    <div class="dbody">
      {#each sections as s, n}
        <section class="sec" class:first={n === 0} class:shut={!s.fields} class:tall={s.preview}>
          <header><h3>{s.title}</h3>{@render ic(s.fields ? 'up' : 'down')}</header>
          {#each s.fields ?? [] as [label, value]}
            <label class="field"><span>{label}</span><span class="sel" class:hot={s.point}><select><option>{value}</option></select></span></label>
          {/each}
          {#if s.point}
            <div class="pointrow">
              <button class="spec">{@render ic('tick')}指定点</button>
              <button class="pd" aria-label="点对话框">{@render ic('ptdlg')}</button>
              <button class="yl" aria-label="自动判断的点">{@render ic('bolt')}</button>
              <button class="yl slim" aria-label="点类型"><i class="caret"></i></button>
            </div>
          {/if}
          {#if s.preview}
            <div class="prev"><label><input type="checkbox" bind:checked={preview} />预览</label><span>显示</span><button aria-label="显示">{@render ic('torch')}</button></div>
          {/if}
        </section>
      {/each}
    </div>
    <div class="dfoot"><button class="ok">确定</button><button>取消</button></div>
  </section>

  <div class="badge" aria-hidden="true"><svg viewBox="0 0 30 25"><g fill="none" stroke="#fff" stroke-width="2.500"><circle cx="15" cy="9" r="4" /><circle cx="10" cy="15.500" r="4" /><circle cx="20" cy="15.500" r="4" /></g></svg><span></span><b>!</b></div>
  <div class="mark soft"><p>原创正版:</p><p>QQ:156327228</p><p>TEL:13416346406</p></div>
  <div class="mark ad"><span>教程购买：</span><span class="num">13416346406</span><span class="qq">QQ</span><span class="colon">:</span><span>15632</span></div>
</div>

<style>
  :global(body) { background: #fff; overflow: hidden; }
  .app { position: relative; height: 100vh; display: flex; flex-direction: column; overflow: hidden; background: #fdfdfd; color: #222; font: 11px/16px "Open Sans", "Noto Sans CJK SC", sans-serif; white-space: nowrap; box-sizing: border-box; }
  .app :global(*) { box-sizing: border-box; }
  button { border: 0; background: none; padding: 0; margin: 0; font: inherit; color: inherit; display: flex; align-items: center; justify-content: center; flex: none; }
  h1, h2, h3, p { margin: 0; font-weight: 400; }
  .ic { width: 18px; height: 18px; flex: none; display: block; overflow: visible; }
  .ic32 { width: 30px; height: 32px; flex: none; }
  .caret { flex: none; width: 0; height: 0; border: 3px solid transparent; border-top: 4px solid #111; border-bottom: 0; }
  .dim { opacity: .5; }
  .bar { flex: none; width: 1px; height: 22px; background: #d4d4d4; }

  .quick { flex: none; height: 34px; border-top: 1px solid #a5a5a5; display: flex; align-items: center; gap: 5px; padding-right: 2px; }
  .quick > .ic:first-child { margin-left: -8px; }
  .flat { gap: 5px; }
  .dimtext { color: #b5b5b5; }
  h1 { font-size: 12px; flex: 1; text-align: center; padding-right: 60px; padding-left: 50px; }
  .brand { color: #2d9b95; font-weight: 700; font-size: 13px; padding-top: 6px; margin-right: 17px; }
  .min { font-size: 14px; width: 8px; padding-top: 10px; }

  .tabs { flex: none; height: 28px; background: #dadada; display: flex; padding-right: 40px; }
  .tabs button { padding: 0 13px; font-size: 13px; color: #444; }
  .tabs button:first-child { margin-left: -5px; }
  .tabs .dark { color: #111; }
  .tabs .active { background: #fff; color: #1b7484; border-top: 1px solid #999; }

  .ribbon { flex: none; height: 94px; display: flex; border-bottom: 1px solid #d8d8d8; padding-top: 4px; }
  .group { flex: none; display: flex; flex-direction: column; justify-content: space-between; border-right: 1px solid #dadada; }
  .body { display: flex; height: 66px; }
  .mid { justify-content: center; }
  .blade { width: 210px; margin-left: -89px; }
  .blade .body { justify-content: flex-end; padding-right: 8px; }
  .acts { width: 56px; }
  .ops { width: 311px; }
  .show { width: 125px; }
  .anim { width: 235px; }
  .work { width: 136px; }
  .gc { width: 150px; }
  .ana { width: 67px; }
  .geom { width: 130px; }
  .last { width: 80px; border: 0; }
  .foot { display: flex; align-items: center; height: 18px; padding-right: 7px; color: #1c6f7b; }
  .foot span { flex: 1; text-align: center; }
  .big { flex-direction: column; justify-content: flex-start; min-width: 40px; }
  .big .lbl { line-height: 16px; margin-top: 5px; }
  .big .caret { margin-top: 4px; }
  .dis { color: #bcbcbc; }
  .blade .big { width: 60px; }
  .blade .big + .big { width: 54px; }
  .ops .body { padding-left: 9px; }
  .ops .big { width: 53px; }
  .ops .narrow { width: 42px; }
  .ops .boxed { width: 37px; min-width: 37px; margin-left: 6px; }
  .boxed .ic32 { width: 37px; height: 34px; padding: 3px; border: 1px solid #ccc; border-radius: 3px; margin-bottom: -2px; }
  .boxed { color: #111; }
  .anim .big { width: 40px; }
  .anim .body { padding-left: 9px; }
  .anim .trio { width: 22px; }
  .trio + .trio { margin-left: 10px; }
  .work .body { padding-left: 10px; gap: 4px; }
  .geom .body { padding-left: 8px; gap: 2px; }
  .geom .big:last-child { margin-left: 2px; }
  .last .body { padding-left: 8px; }
  .col { display: flex; flex-direction: column; align-items: center; }
  .tool { width: 22px; height: 22px; }
  .on { background: #c9e3e6; border: 1px solid #a9d0d6; }
  .grid3 { display: grid; grid-template-columns: repeat(3, 37px); padding-left: 9px; height: 66px; }
  .grid3 div { display: flex; align-items: center; gap: 4px; }
  .speed { display: flex; flex-direction: column; align-items: center; padding-top: 7px; gap: 9px; margin-left: 3px; }
  .speed .sel { width: 80px; height: 21px; }
  .two { padding: 5px 0 0 4px; display: grid; gap: 9px; }
  .two div { display: flex; align-items: center; gap: 1px; }
  .two .bar { height: 18px; margin: 0 1px; }

  .sel { position: relative; display: inline-flex; flex: none; background: #fff; border: 1px solid #9e9e9e; }
  .sel::after { content: ""; position: absolute; right: 5px; top: 50%; margin-top: -2px; border: 4px solid transparent; border-top: 5px solid #111; border-bottom: 0; pointer-events: none; }
  select { appearance: none; border: 0; background: transparent; font: inherit; color: #222; width: 100%; padding: 0 3px; outline: 0; border-radius: 0; }

  .picks { flex: none; height: 32px; display: flex; align-items: center; gap: 7px; border-bottom: 1px solid #8f8f8f; padding-left: 8px; }
  .cluster { display: flex; align-items: center; gap: 3px; margin: 0 -2px 0 2px; }
  .a { margin: 0; }
  .b { margin: 0 0 0 2px; }
  .gapless { width: 11px; border: 0; height: 4px; margin-left: -3px; display: flex; justify-content: center; }
  .gapless::before { content: ""; border: 3px solid transparent; border-top: 4px solid #111; border-bottom: 0; }
  .picks .sel { height: 20px; }
  .filter { width: 133px; margin-left: 4px; }
  .scope { width: 141px; margin-left: 2px; margin-right: -5px; }

  main { flex: 1; min-height: 0; display: flex; }
  aside { flex: none; width: 402px; padding-right: 11px; border-right: 1px solid #777; display: flex; flex-direction: column; overflow: hidden; }
  .dock { flex: none; height: 29px; display: flex; align-items: center; justify-content: space-between; padding-right: 1px; }
  .dock h2 { font-size: 12px; margin-left: -43px; }
  .dock .ic { width: 16px; height: 16px; }
  .tablewrap { flex: 1; min-height: 0; overflow: hidden; border-right: 1px solid #ccc; border-top: 1px solid #ccc; }
  table { border-collapse: separate; border-spacing: 0; table-layout: fixed; width: 100%; font-size: 12px; }
  th { height: 21px; background: #ececec; font-weight: 400; text-align: left; padding: 0 6px; border-bottom: 1px solid #ccc; border-right: 1px solid #ccc; }
  th:last-child, td:last-child { border-right: 0; }
  .c1 { width: 169px; }
  .c2 { width: 62px; }
  td { height: 20px; padding: 0; border-bottom: 1px solid #e6e6e6; border-right: 1px solid #dcdcdc; line-height: 18px; }
  td.c1 { border-right: 1px solid #111; }
  td.c2 { padding-left: 5px; }
  tbody tr:nth-child(even) td { background: #f7f7f7; }
  tbody tr.picked td { background: #8bbfca; }
  .purple { color: #75489a; }
  .clip { overflow: hidden; padding-left: 5px; height: 18px; }
  .name { display: flex; align-items: center; height: 19px; }
  .name .ic { width: 17px; height: 17px; }
  .name span { padding-left: 3px; }
  .far { margin-left: -22px; }
  .near { margin-left: -13px; }
  .n1 { margin-left: -14px; }
  .n2 { margin-left: -12px; }
  .hscroll { flex: none; height: 16px; background: #ebebeb; display: flex; justify-content: space-between; align-items: center; margin-top: 1px; }
  .thumb { width: 84px; height: 100%; background: #c9c9c9; }
  .hscroll .ic { width: 12px; height: 12px; margin-right: 4px; }
  .splitter { flex: none; height: 5px; margin-top: 2px; border: 1px solid #999; border-width: 1px 0; background: #ddd; }
  .fold { height: 24px; border-bottom: 2px solid #cfcfcf; justify-content: flex-end; padding-right: 3px; }
  .fold:last-child { margin-bottom: 6px; }
  .fold .ic, .sec header .ic { width: 16px; height: 16px; }

  .view { flex: 1; min-width: 0; display: flex; flex-direction: column; }
  .doctabs { flex: none; height: 23px; display: flex; border-bottom: 2px solid #69929d; font-size: 12px; }
  .doctabs button { gap: 4px; padding: 0 6px; width: 138px; justify-content: flex-start; }
  .doctabs .ic { width: 16px; height: 16px; }
  .doctabs .cur { background: #559eb4; color: #fff; width: 112px; }
  .doctabs .x { color: #b9cdd3; }
  .doctabs .x .ic { width: 10px; }
  .canvas { flex: 1; min-height: 0; width: 100%; display: block; }
  .axis { font: 13px "Liberation Sans", sans-serif; }

  .status { flex: none; height: 22px; border-top: 1px solid #a5a5a5; display: flex; align-items: center; justify-content: space-between; font-weight: 500; color: #111; overflow: hidden; padding-bottom: 2px; }
  .status span { margin-left: -30px; }
  .status .ic { width: 17px; height: 17px; margin-right: -8px; }
  .taskbar { flex: none; height: 48px; border-top: 8px solid #5b9aaf; background: linear-gradient(90deg, #1f363f 40%, #18233c 85%); display: flex; overflow: hidden; }
  .app-btn { width: 49px; }
  .app-btn svg { width: 24px; height: 24px; }
  .current { background: #4a626b; }
  .current, .open { box-shadow: inset 0 -2px #7fb2da; }
  .open { width: 41px; margin: 0 4px; }
  .tray { margin-left: auto; display: flex; align-items: center; gap: 8px; color: #fff; font-size: 16px; margin-right: -5px; }
  .tray svg { width: 16px; height: 16px; }

  .dialog { position: absolute; top: 0; right: 38px; width: 328px; background: #ececec; font-size: 12px; }
  .dtitle { height: 24px; background: #559eb4; color: #fff; display: flex; align-items: center; padding: 0 8px 0 6px; gap: 8px; }
  .dtitle h2 { font-size: 14px; flex: 1; }
  .dtitle .ic { width: 14px; height: 14px; }
  .dbody { padding: 0 6px; display: flex; flex-direction: column; gap: 3px; }
  .sec { background: #fdfdfd; border-bottom: 1px solid #b9b9b9; padding: 0 9px 8px 8px; display: flex; flex-direction: column; gap: 3px; }
  .first { padding-top: 4px; }
  .sec header { height: 28px; padding-bottom: 3px; display: flex; justify-content: space-between; align-items: center; margin-right: -5px; }
  h3 { font-size: 14px; color: #1c6675; line-height: 20px; margin-left: -1px; }
  .shut { padding-bottom: 0; height: 24px; }
  .tall { padding-bottom: 31px; }
  .field { display: flex; align-items: center; justify-content: space-between; height: 24px; }
  .field .sel { width: 141px; height: 25px; }
  .hot select { background: #abd3e0; outline: 1px dotted #222; margin: 3px 19px 3px 3px; padding: 0; }
  .pointrow { display: flex; height: 31px; align-items: center; gap: 2px; }
  .spec { flex: 1; background: #fbe07a; height: 100%; justify-content: flex-start; gap: 5px; padding-left: 2px; }
  .spec .ic { width: 14px; height: 14px; }
  .pd { width: 24px; height: 24px; border: 1px solid #999; background: #fff; }
  .yl { background: #fbe07a; width: 31px; height: 100%; }
  .slim { width: 17px; margin-left: -1px; }
  .prev { display: flex; align-items: center; height: 31px; gap: 2px; }
  .prev label { flex: 1; display: flex; align-items: center; gap: 5px; }
  input { appearance: none; width: 13px; height: 13px; margin: 0 0 0 1px; border: 1px solid #333; background: #fff; display: grid; place-items: center; }
  input:checked::after { content: ""; width: 4px; height: 8px; margin-top: -2px; border: solid #222; border-width: 0 1px 1px 0; transform: rotate(40deg); }
  .prev button { width: 31px; height: 31px; border: 1px solid #999; background: #fff; }
  .prev button .ic { width: 22px; height: 22px; }
  .dfoot { display: flex; justify-content: flex-end; gap: 5px; padding: 11px 16px 11px 0; }
  .dfoot button { width: 54px; height: 25px; border: 1px solid #999; background: #dcdcdc; }
  .dfoot .ok { background: #6fb0c3; color: #fff; border-color: #6fb0c3; }

  .badge { position: absolute; top: 28px; right: 2px; width: 113px; height: 25px; display: flex; background: #2b93e4; border-radius: 4px; opacity: .95; }
  .badge svg { width: 30px; height: 25px; }
  .badge span { flex: 1; background: rgba(190, 230, 250, .75); border: 1px solid #3b8fd0; }
  .badge b { position: absolute; right: 0; bottom: -3px; width: 12px; height: 12px; border-radius: 6px; background: #3f51b5; color: #fff; font-size: 9px; line-height: 12px; text-align: center; }
  .mark { position: absolute; pointer-events: none; }
  .soft { top: 15px; left: -28px; color: rgba(232, 120, 110, .3); font: 300 40px/52px "Noto Sans", "Noto Sans CJK SC", sans-serif; display: grid; justify-items: start; }
  .ad { top: 17px; left: 1206px; display: flex; align-items: center; color: #cf1515; font: 33px/42px "Liberation Serif", "Noto Serif CJK SC", "Noto Sans CJK SC", serif; }
  .num { margin-right: 21px; }
  .qq { font: 28px/42px "Liberation Mono", monospace; }
  .colon { width: 38px; padding-left: 6px; }
</style>
